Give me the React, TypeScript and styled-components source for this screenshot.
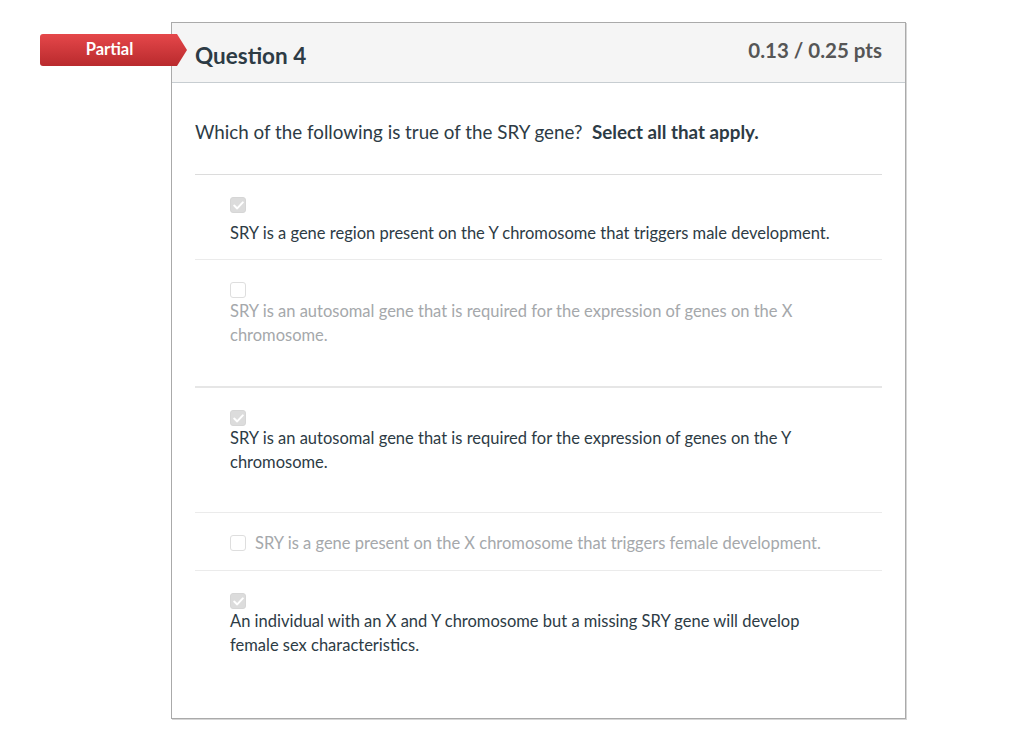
import React from "react";
import styled, { createGlobalStyle } from "styled-components";

const GlobalStyle = createGlobalStyle`
  html, body {
    margin: 0;
    padding: 0;
    background: #ffffff;
  }
  body {
    font-family: Lato, "Liberation Sans", Arial, sans-serif;
    color: #2d3b45;
  }
`;

interface IAnswer {
  text: string;
  checked: boolean;
  inline?: boolean;
  gap: number;
  bottom: number;
  thickLine?: boolean;
}

const answers: Array<IAnswer> = [
  {
    text: "SRY is a gene region present on the Y chromosome that triggers male development.",
    checked: true,
    gap: 8,
    bottom: 14,
  },
  {
    text: "SRY is an autosomal gene that is required for the expression of genes on the X chromosome.",
    checked: false,
    gap: 1,
    bottom: 39,
    thickLine: true,
  },
  {
    text: "SRY is an autosomal gene that is required for the expression of genes on the Y chromosome.",
    checked: true,
    gap: 0,
    bottom: 38,
  },
  {
    text: "SRY is a gene present on the X chromosome that triggers female development.",
    checked: false,
    inline: true,
    gap: 0,
    bottom: 15,
  },
  {
    text: "An individual with an X and Y chromosome but a missing SRY gene will develop female sex characteristics.",
    checked: true,
    gap: 0,
    bottom: 0,
  },
];

function CheckMark() {
  return (
    <svg width="11" height="9" viewBox="0 0 11 9">
      <path
        d="M1.2 4.6 L4.2 7.4 L9.8 1.4"
        fill="none"
        stroke="#ffffff"
        strokeWidth="2"
        strokeLinecap="round"
        strokeLinejoin="round"
      />
    </svg>
  );
}

function App() {
  return (
    <>
      <GlobalStyle />
      <Page>
        <Card>
          <Badge>
            <span>Partial</span>
          </Badge>
          <Header>
            <Title>Question 4</Title>
            <Points>0.13 / 0.25 pts</Points>
          </Header>

          <Body>
            <QuestionText>
              Which of the following is true of the SRY gene?&nbsp;{" "}
              <strong>Select all that apply.</strong>
            </QuestionText>

            <AnswerList>
              {answers.map((item, idx) => (
                <Answer
                  key={idx}
                  $inline={item.inline}
                  $gap={item.gap}
                  $bottom={item.bottom}
                  $thick={item.thickLine}
                  $last={idx === answers.length - 1}
                >
                  <Box $checked={item.checked}>
                    {item.checked ? <CheckMark /> : null}
                  </Box>
                  <AnswerText $checked={item.checked}>{item.text}</AnswerText>
                </Answer>
              ))}
            </AnswerList>
          </Body>
        </Card>
      </Page>
    </>
  );
}

export default App;

const Page = styled.div`
  padding: 22px 0 20px 171px;
`;

const Card = styled.div`
  position: relative;
  width: 733px;
  height: 695px;
  border: 1px solid #aaaaaa;
  box-shadow: 1px 1px 0 #d6d6d6;
  background: #ffffff;
`;

const Badge = styled.div`
  position: absolute;
  left: -132px;
  top: 11px;
  width: 147px;
  height: 32px;
  background: linear-gradient(#e5474a, #b92a2d);
  clip-path: polygon(0 0, 137px 0, 147px 16px, 137px 32px, 0 32px);
  border-radius: 3px 0 0 3px;
  display: flex;
  align-items: center;

  span {
    width: 139px;
    text-align: center;
    color: #ffffff;
    font-weight: 700;
    font-size: 16.5px;
    padding-bottom: 2px;
  }
`;

const Header = styled.div`
  height: 59px;
  padding: 0 23px 0 23px;
  background: #f5f5f5;
  border-bottom: 1px solid #c7cdd1;
  display: flex;
  justify-content: space-between;
  align-items: flex-start;
`;

const Title = styled.div`
  margin-top: 19px;
  font-size: 22.5px;
  font-weight: 700;
  color: #2d3b45;
`;

const Points = styled.div`
  margin-top: 15px;
  font-size: 20.5px;
  font-weight: 700;
  color: #565656;
`;

const Body = styled.div`
  padding: 0 23px;
`;

const QuestionText = styled.p`
  margin: 0;
  padding: 37px 0 30px;
  font-size: 18.8px;
  line-height: 24px;
  color: #2d3b45;
  border-bottom: 1px solid #dcdcdc;

  strong {
    font-weight: 700;
  }
`;

const AnswerList = styled.div`
  display: flex;
  flex-direction: column;
`;

const Answer = styled.div<{
  $inline?: boolean;
  $gap: number;
  $bottom: number;
  $thick?: boolean;
  $last?: boolean;
}>`
  display: flex;
  flex-direction: ${(p) => (p.$inline ? "row" : "column")};
  align-items: ${(p) => (p.$inline ? "center" : "flex-start")};
  gap: ${(p) => p.$gap}px;
  padding: ${(p) => (p.$inline ? "18px" : "22px")} 0 ${(p) => p.$bottom}px 35px;
  border-bottom: ${(p) =>
    p.$last ? "none" : p.$thick ? "2px solid #e6e6e6" : "1px solid #ebebeb"};
`;

const Box = styled.div<{ $checked: boolean }>`
  width: 16px;
  height: 16px;
  flex: none;
  border-radius: 3px;
  box-sizing: border-box;
  margin-right: 9px;
  display: flex;
  align-items: center;
  justify-content: center;
  background: ${(p) => (p.$checked ? "#dcdcdc" : "#ffffff")};
  border: 1px solid ${(p) => (p.$checked ? "#d6d6d6" : "#dedede")};
`;

const AnswerText = styled.div<{ $checked: boolean }>`
  max-width: 612px;
  font-size: 16.5px;
  line-height: 24px;
  color: ${(p) => (p.$checked ? "#2d3b45" : "#a5a8ab")};
`;
